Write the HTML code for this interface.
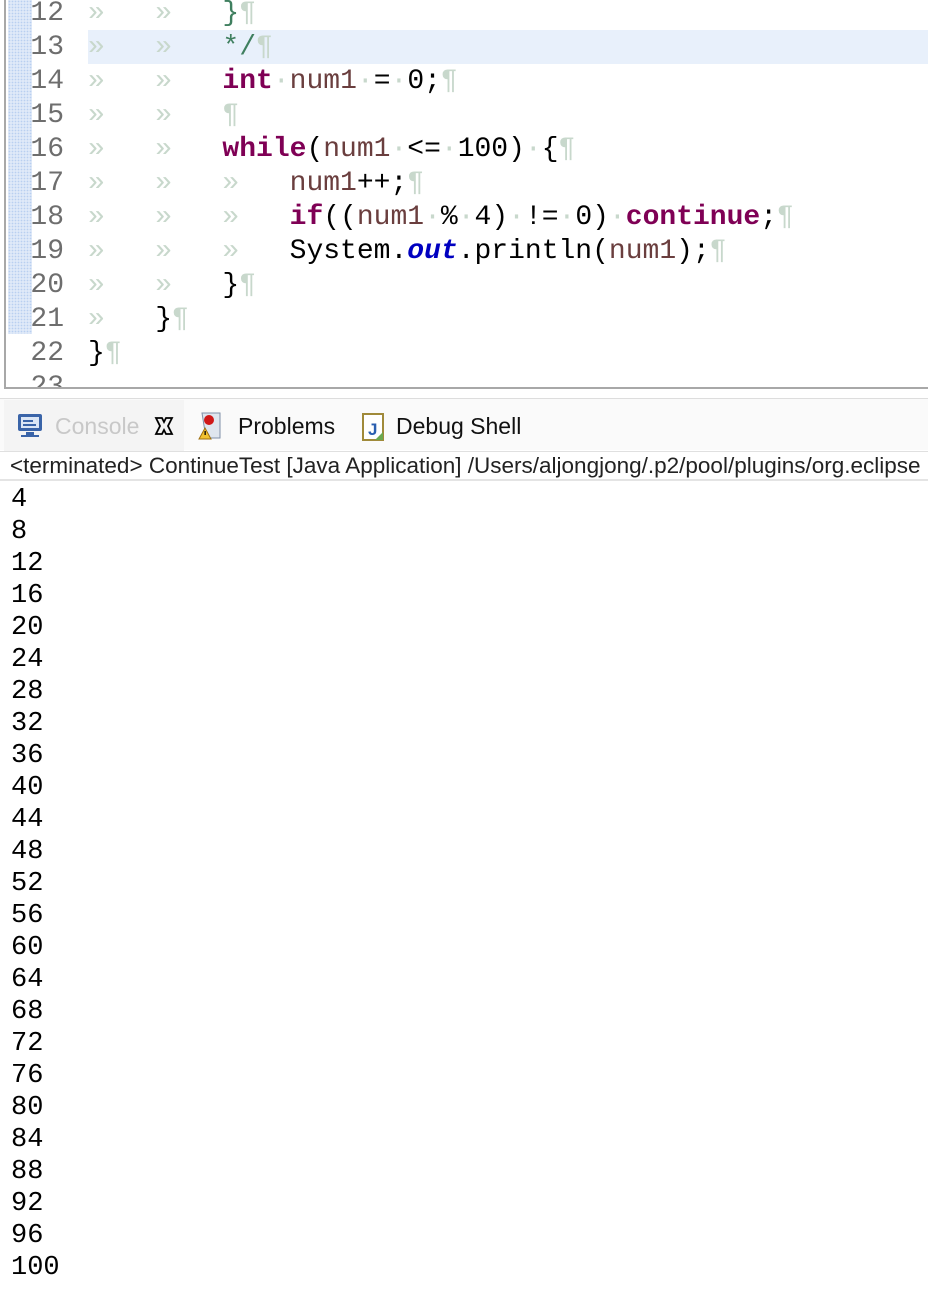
<!DOCTYPE html>
<html><head><meta charset="utf-8"><style>
*{margin:0;padding:0;box-sizing:border-box}
body{width:928px;height:1304px;background:#fff;position:relative;overflow:hidden;font-family:"Liberation Sans",sans-serif}
.ed{position:absolute;left:4px;top:0;width:924px;height:389px;border-left:2px solid #a8a8a8;border-bottom:2px solid #a8a8a8;overflow:hidden}
.stripe{position:absolute;left:2px;top:0;width:24px;height:334px;background-color:#dfe9f8;background-image:radial-gradient(#b9cff0 35%,transparent 40%);background-size:3px 3px}
.ln{position:absolute;left:0;width:58px;text-align:right;font:28px/34px "Liberation Mono",monospace;color:#6e6e6e}
.cl{position:absolute;left:82px;font:28px/34px "Liberation Mono",monospace;white-space:pre;color:#000}
.hl{position:absolute;left:82px;top:30px;width:850px;height:34px;background:#e8f0fb}
.w{color:#c8d8cc}.k{color:#7f0055;font-weight:bold}.v{color:#6a3e3e}.c{color:#3f7f5f}.o{color:#0000c0;font-weight:bold;font-style:italic}
.tabs{position:absolute;left:0;top:398px;width:928px;height:52px;border-top:1px solid #ddd;background:#fafafa}
.tab1{position:absolute;left:4px;top:400px;width:180px;height:52px;background:#f4f4f4}
.hdr{position:absolute;left:0;top:451px;width:928px;height:30px;overflow:hidden;border-top:1px solid #e0e0e0;border-bottom:2px solid #e4e4e4;font-size:22.5px;line-height:28px;padding-left:10px;white-space:nowrap;color:#222}
.out{position:absolute;left:11px;top:484px;font:27px/32px "Liberation Mono",monospace;color:#000;white-space:pre}
.t{position:absolute;top:412px;font-size:23px;line-height:28px;color:#111}
</style></head><body>
<div class="ed">
<div class="stripe"></div>
<div class="hl"></div>
<div class="ln" style="top:-3px">12</div>
<div class="ln" style="top:31px">13</div>
<div class="ln" style="top:65px">14</div>
<div class="ln" style="top:99px">15</div>
<div class="ln" style="top:133px">16</div>
<div class="ln" style="top:167px">17</div>
<div class="ln" style="top:201px">18</div>
<div class="ln" style="top:235px">19</div>
<div class="ln" style="top:269px">20</div>
<div class="ln" style="top:303px">21</div>
<div class="ln" style="top:337px">22</div>
<div class="ln" style="top:371px">23</div>
<div class="cl" style="top:-3px"><span class="w">»   »   </span><span class="c">}</span><span class="w">¶</span></div>
<div class="cl" style="top:31px"><span class="w">»   »   </span><span class="c">*/</span><span class="w">¶</span></div>
<div class="cl" style="top:65px"><span class="w">»   »   </span><span class="k">int</span><span class="w">·</span><span class="v">num1</span><span class="w">·</span>=<span class="w">·</span>0;<span class="w">¶</span></div>
<div class="cl" style="top:99px"><span class="w">»   »   ¶</span></div>
<div class="cl" style="top:133px"><span class="w">»   »   </span><span class="k">while</span>(<span class="v">num1</span><span class="w">·</span>&lt;=<span class="w">·</span>100)<span class="w">·</span>{<span class="w">¶</span></div>
<div class="cl" style="top:167px"><span class="w">»   »   »   </span><span class="v">num1</span>++;<span class="w">¶</span></div>
<div class="cl" style="top:201px"><span class="w">»   »   »   </span><span class="k">if</span>((<span class="v">num1</span><span class="w">·</span>%<span class="w">·</span>4)<span class="w">·</span>!=<span class="w">·</span>0)<span class="w">·</span><span class="k">continue</span>;<span class="w">¶</span></div>
<div class="cl" style="top:235px"><span class="w">»   »   »   </span>System.<span class="o">out</span>.println(<span class="v">num1</span>);<span class="w">¶</span></div>
<div class="cl" style="top:269px"><span class="w">»   »   </span>}<span class="w">¶</span></div>
<div class="cl" style="top:303px"><span class="w">»   </span>}<span class="w">¶</span></div>
<div class="cl" style="top:337px">}<span class="w">¶</span></div>
</div>
<div class="tabs"></div>
<div class="tab1"></div>
<svg style="position:absolute;left:17px;top:413px" width="28" height="26"><rect x="1" y="1" width="24" height="17" rx="2" fill="#3a64a8"/><rect x="4" y="4" width="18" height="11" fill="#dbe6f5"/><rect x="6" y="7" width="10" height="2" fill="#3a64a8"/><rect x="6" y="11" width="13" height="2" fill="#3a64a8"/><rect x="9" y="19" width="8" height="3" fill="#3a64a8"/><rect x="4" y="22" width="18" height="2" fill="#3a64a8"/></svg>
<div class="t" style="left:55px;color:#c8c8c8">Console</div>
<svg style="position:absolute;left:153px;top:415px" width="22" height="22"><path d="M3 3 L9 3 L11 7 L13 3 L19 3 L15 11 L19 19 L13 19 L11 15 L9 19 L3 19 L7 11 Z" fill="none" stroke="#000" stroke-width="1.8"/></svg>
<svg style="position:absolute;left:196px;top:410px" width="32" height="32"><path d="M6 3 L24 3 L24 28 L10 28 Z" fill="#dfe6ee" stroke="#8090a8"/><circle cx="13" cy="10" r="5" fill="#d01818"/><path d="M9 18 L15 29 L3 29 Z" fill="#f2c230" stroke="#a07010"/><rect x="8.5" y="21" width="1.3" height="4" fill="#000"/></svg>
<div class="t" style="left:238px">Problems</div>
<svg style="position:absolute;left:361px;top:411px" width="26" height="32"><rect x="2" y="3" width="20" height="26" fill="#fff" stroke="#a08a3a" stroke-width="2"/><path d="M14 29 L22 21 L22 29 Z" fill="#6aa84f"/><text x="7" y="24" font-size="17" font-weight="bold" fill="#2b5fb0" font-family="Liberation Sans">J</text></svg>
<div class="t" style="left:396px">Debug Shell</div>
<div class="hdr">&lt;terminated&gt; ContinueTest [Java Application] /Users/aljongjong/.p2/pool/plugins/org.eclipse</div>
<div class="out">4
8
12
16
20
24
28
32
36
40
44
48
52
56
60
64
68
72
76
80
84
88
92
96
100</div>
</body></html>
